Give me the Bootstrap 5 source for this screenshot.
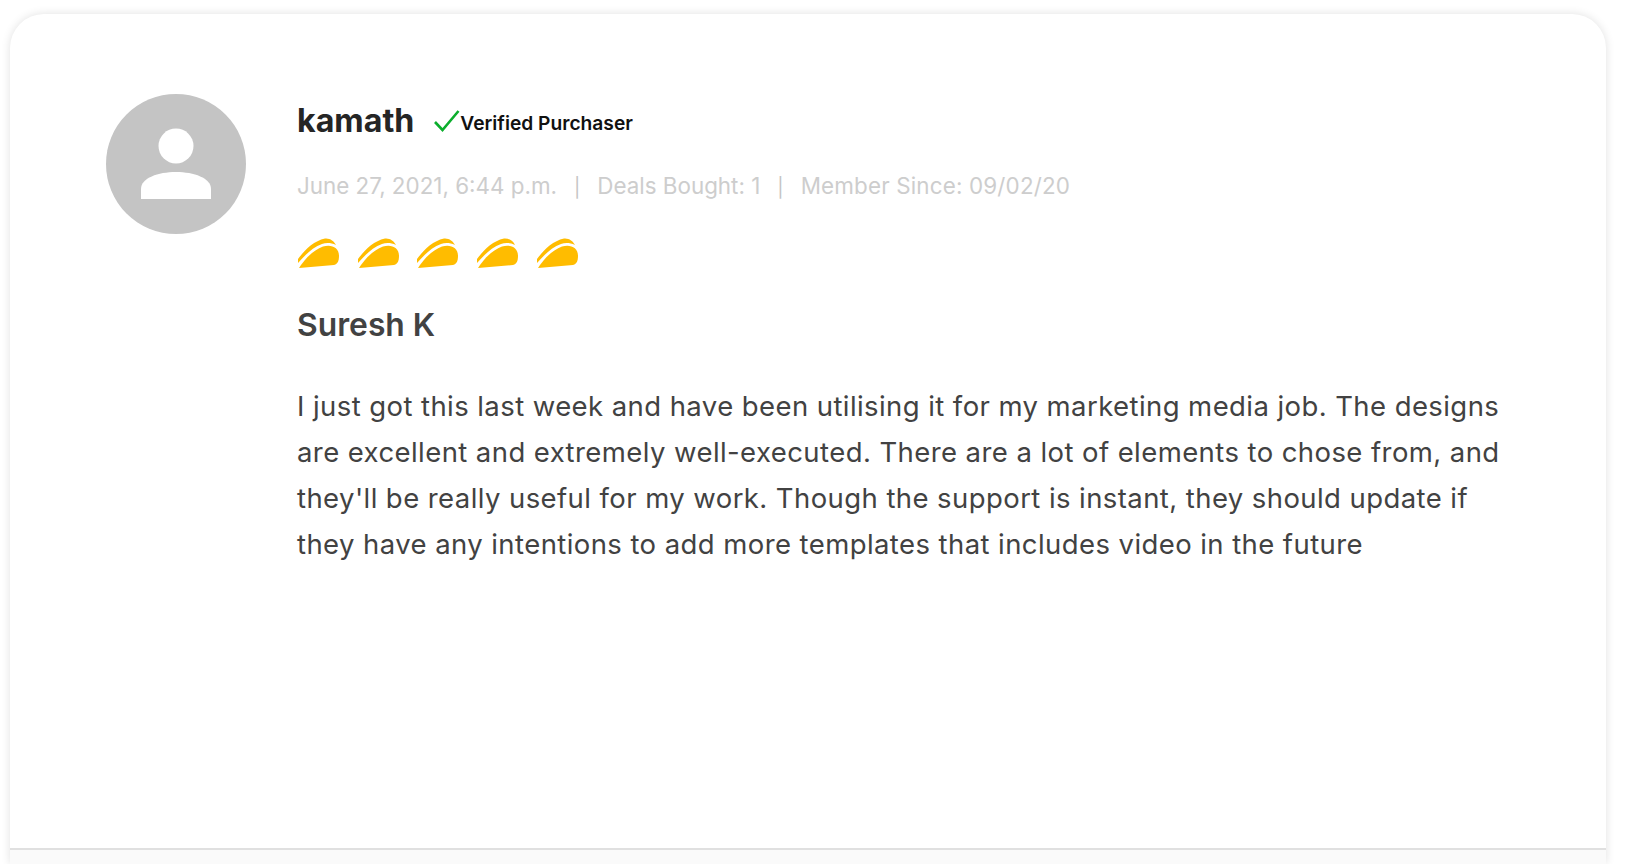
<!DOCTYPE html>
<html lang="en">
<head>
    <meta charset="UTF-8">
    <title>Review</title>
    <link href="https://cdn.jsdelivr.net/npm/bootstrap@5.3.0/dist/css/bootstrap.min.css" rel="stylesheet">
    <style>
        body { background: #fff; font-family: "Inter", "Liberation Sans", sans-serif; height: 864px; overflow: hidden; }
        .review-shell { padding: 14px 20px 0 10px; }
        .review-box { height: 850px; border-radius: 34px 34px 0 0; box-shadow: 0 0 10px rgba(0,0,0,.12); background: #fff; overflow: hidden; }
        .review-main { height: 836px; padding: 80px 91px 0 96px; gap: 51px; border-bottom: 2px solid #e0e0e0; }
        .review-foot { height: 14px; background: #fafafa; }
        .avatar-svg { width: 140px; height: 140px; flex: none; }
        .head-row { margin-top: 8px; }
        .reviewer-name { font-size: 32.2px; font-weight: 700; color: #252525; line-height: 38px; }
        .verified-tag { font-size: 19.2px; font-weight: 600; color: #111; margin-top: 4px; }
        .check-svg { margin-left: 19px; }
        .review-meta { font-size: 22.4px; color: #cdcdcd; margin-top: 32px; line-height: 28px; }
        .meta-since { letter-spacing: .17px; }
        .meta-sep { margin: 0 17px; font-size: 19px; color: #c4c4c4; }
        .taco-row { gap: 17.7px; margin-top: 36px; margin-left: 1px; }
        .review-title { font-size: 31.8px; font-weight: 600; color: #424242; line-height: 38px; margin-top: 38px; }
        .review-text { font-size: 27.5px; letter-spacing: .42px; line-height: 46px; color: #424242; margin-top: 39px; margin-bottom: 0; }
    </style>
</head>
<body>
    <div class="review-shell">
        <div class="review-box">
            <div class="review-main d-flex align-items-start">
                <svg class="avatar-svg" viewBox="0 0 140 140">
                    <circle cx="70" cy="70" r="70" fill="#c4c4c4"/>
                    <circle cx="70" cy="52" r="17.5" fill="#fff"/>
                    <path d="M35 105 V95 C35 84 52 78 70 78 C88 78 105 84 105 95 V105 Z" fill="#fff"/>
                </svg>
                <div class="flex-grow-1">
                    <div class="head-row d-flex align-items-center">
                        <span class="reviewer-name">kamath</span>
                        <svg class="check-svg" width="27" height="24" viewBox="0 0 27 24"><path d="M2 13 L9.500 21 L25.500 2" fill="none" stroke="#0cae2d" stroke-width="2.600"/></svg>
                        <span class="verified-tag">Verified Purchaser</span>
                    </div>
                    <div class="review-meta">June 27, 2021, 6:44 p.m.<span class="meta-sep">|</span>Deals Bought: 1<span class="meta-sep">|</span><span class="meta-since">Member Since: 09/02/20</span></div>
                    <div class="taco-row d-flex">
                        <svg width="42" height="30" viewBox="0 0 42 30"><use href="#taco"/></svg>
                        <svg width="42" height="30" viewBox="0 0 42 30"><use href="#taco"/></svg>
                        <svg width="42" height="30" viewBox="0 0 42 30"><use href="#taco"/></svg>
                        <svg width="42" height="30" viewBox="0 0 42 30"><use href="#taco"/></svg>
                        <svg width="42" height="30" viewBox="0 0 42 30"><use href="#taco"/></svg>
                    </div>
                    <div class="review-title">Suresh K</div>
                    <p class="review-text">I just got this last week and have been utilising it for my marketing media job. The designs are excellent and extremely well-executed. There are a lot of elements to chose from, and they'll be really useful for my work. Though the support is instant, they should update if they have any intentions to add more templates that includes video in the future</p>
                </div>
            </div>
            <div class="review-foot"></div>
        </div>
    </div>
    <svg width="0" height="0" class="d-block">
        <defs>
            <g id="taco">
                <path d="M0 21 C6 13 15 3 27 .5 C32 0 36 3 38 7 C33 4.500 28 4.500 24 6 C15 9 7 17 0 25 Z" fill="#ffbc00"/>
                <path d="M1 30 C6 22 15 12 25 8.500 C33 6 41 9 41 18 C41 22 40 26 36 27 Z" fill="#ffbc00"/>
            </g>
        </defs>
    </svg>
</body>
</html>
